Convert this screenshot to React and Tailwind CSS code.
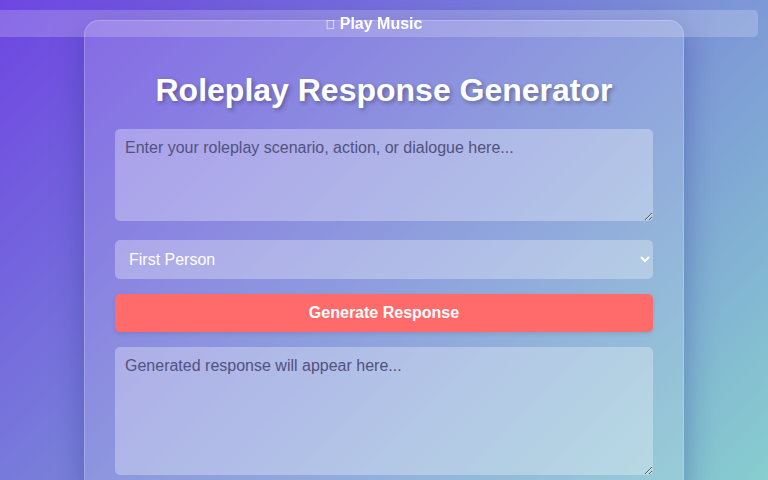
import React, { useState } from "react";

function App() {
  const [input, setInput] = useState("");
  const [perspective, setPerspective] = useState("first");
  const [output, setOutput] = useState("");

  const font = { fontFamily: '"Liberation Sans", Arial, sans-serif' };

  return (
    <div
      className="min-h-screen bg-[linear-gradient(135deg,#6e45e2,#88d3ce)] p-5 text-[#333]"
      style={font}
    >
      {/* music toggle */}
      <button className="fixed top-[10px] right-[10px] z-10 h-[27px] w-full rounded-[5px] bg-white/20 text-[16px] font-bold text-white">
        <span className="text-[13px]">{"\uf001"}</span> Play Music
      </button>

      <div className="mx-auto max-w-[600px] rounded-[15px] border border-white/20 bg-white/15 p-[30px] shadow-[0_8px_32px_0_rgba(31,38,135,0.37)]">
        <h1 className="mt-[21px] mb-[20px] text-center text-[32px] leading-[37px] font-bold text-white [text-shadow:2px_2px_4px_rgba(0,0,0,0.3)]">
          Roleplay Response Generator
        </h1>

        <div className="flex flex-col">
          <textarea
            value={input}
            onChange={(e) => setInput(e.target.value)}
            placeholder="Enter your roleplay scenario, action, or dialogue here..."
            className="h-[92px] w-full rounded-[5px] bg-white/30 p-[10px] text-[16px] leading-[normal] text-[#333] outline-none placeholder:text-[#52527e]"
          />

          <select
            value={perspective}
            onChange={(e) => setPerspective(e.target.value)}
            className="mt-[19px] h-[39px] w-full rounded-[5px] bg-white/30 px-[10px] text-[16px] text-white outline-none"
          >
            <option value="first">First Person</option>
            <option value="second">Second Person</option>
            <option value="third">Third Person</option>
          </select>

          <button
            onClick={() => setOutput(input ? "..." : "")}
            className="mt-[15px] h-[38px] w-full rounded-[5px] bg-[#ff6b6b] text-[16px] font-bold text-white shadow-[0_2px_4px_rgba(0,0,0,0.1)]"
          >
            Generate Response
          </button>

          <textarea
            readOnly
            value={output}
            placeholder="Generated response will appear here..."
            className="mt-[15px] h-[128px] w-full rounded-[5px] bg-white/30 p-[10px] text-[16px] leading-[normal] text-[#333] outline-none placeholder:text-[#52527e]"
          />
        </div>
      </div>
    </div>
  );
}

export default App;
